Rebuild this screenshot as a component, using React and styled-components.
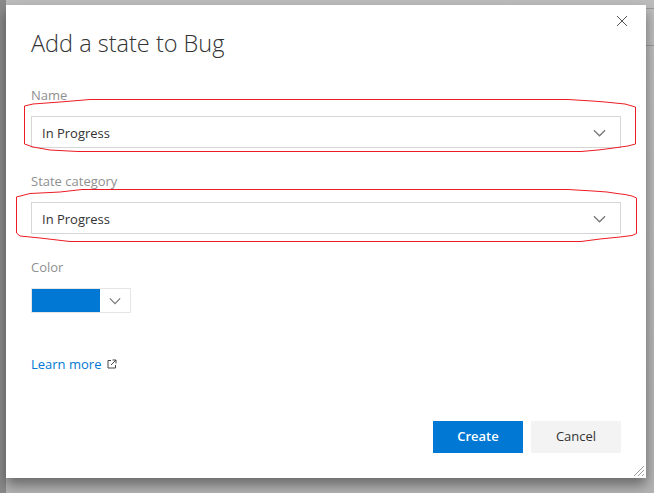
import React from 'react';
import styled, { createGlobalStyle } from 'styled-components';

const Global = createGlobalStyle`
  html, body { margin: 0; padding: 0; }
  body { font-family: "Open Sans", "Noto Sans", sans-serif; overflow: hidden; }
`;

const Backdrop = styled.div`
  position: relative;
  box-sizing: border-box;
  width: 654px;
  height: 493px;
  padding: 5px 8px 15px 6px;
  background:
    linear-gradient(#9a9a9a, #9a9a9a) right 0 top 8px / 8px 1px no-repeat,
    linear-gradient(#9a9a9a, #9a9a9a) right 0 top 45px / 8px 1px no-repeat,
    linear-gradient(#8a8a8a, #8a8a8a) left 0 top 0 / 6px 100% no-repeat,
    linear-gradient(to bottom, #bdbdbd 0, #b4b4b4 400px, #b4b4b4 100%);
`;

const Dialog = styled.div`
  position: relative;
  box-sizing: border-box;
  width: 640px;
  height: 473px;
  padding: 18px 25px 25px;
  display: flex;
  flex-direction: column;
  background: #fff;
  box-shadow: 0 7px 12px rgba(0, 0, 0, 0.42);
`;

const CloseButton = styled.button`
  position: absolute;
  top: 9px;
  right: 17px;
  width: 14px;
  height: 14px;
  padding: 0;
  border: 0;
  background: none;
  display: flex;
`;

const Title = styled.h2`
  margin: 0 0 23px;
  font-size: 23.5px;
  line-height: 40px;
  font-weight: 300;
  color: #333;
`;

const Field = styled.div`
  display: flex;
  flex-direction: column;
  margin-bottom: 24px;
`;

const Label = styled.label`
  font-size: 13px;
  line-height: 18px;
  margin-bottom: 12px;
  color: #8f8f8f;
`;

const SelectBox = styled.div`
  box-sizing: border-box;
  height: 32px;
  padding: 1px 14px 0 10px;
  display: flex;
  align-items: center;
  justify-content: space-between;
  border: 1px solid #d6d6d6;
  font-size: 13px;
  color: #333;
`;

const ColorPicker = styled.div`
  box-sizing: border-box;
  width: 100px;
  height: 25px;
  display: flex;
  border: 1px solid #e6e6e6;
`;

const Swatch = styled.div`
  width: 68px;
  background: ${props => props.color};
`;

const ColorArrow = styled.div`
  flex: 1;
  display: flex;
  align-items: center;
  justify-content: center;
`;

const LearnMore = styled.a`
  margin-top: 18px;
  display: flex;
  align-items: center;
  gap: 6px;
  font-size: 13px;
  line-height: 18px;
  color: #0078d4;
`;

const Footer = styled.div`
  margin-top: auto;
  display: flex;
  justify-content: flex-end;
  gap: 8px;
`;

const Button = styled.button`
  width: 90px;
  height: 32px;
  padding: 0 0 2px;
  border: 0;
  font-family: inherit;
  font-size: 13px;
  font-weight: ${props => (props.primary ? 600 : 400)};
  color: ${props => (props.primary ? '#fff' : '#333')};
  background: ${props => (props.primary ? '#0078d4' : '#f3f3f3')};
`;

const Grip = styled.svg`
  position: absolute;
  right: 2px;
  bottom: 2px;
`;

const Annotations = styled.svg`
  position: absolute;
  left: 0;
  top: 0;
  pointer-events: none;
`;

const Chevron = ({ width = 13, color = '#777' }) => (
  <svg width={width} height="8" viewBox="0 0 14 8" fill="none">
    <path d="M1 1l6 6 6-6" stroke={color} strokeWidth="1.4" />
  </svg>
);

export default function App() {
  return (
    <>
      <Global />
      <Backdrop>
        <Dialog>
          <CloseButton aria-label="Close">
            <svg width="14" height="14" viewBox="0 0 14 14" fill="none">
              <path d="M2 2l10 10M12 2L2 12" stroke="#555" strokeWidth="1" />
            </svg>
          </CloseButton>
          <Title>Add a state to Bug</Title>
          <Field>
            <Label>Name</Label>
            <SelectBox>
              In Progress
              <Chevron />
            </SelectBox>
          </Field>
          <Field>
            <Label>State category</Label>
            <SelectBox>
              In Progress
              <Chevron />
            </SelectBox>
          </Field>
          <Field>
            <Label>Color</Label>
            <ColorPicker>
              <Swatch color="#0078d4" />
              <ColorArrow>
                <Chevron width={12} />
              </ColorArrow>
            </ColorPicker>
          </Field>
          <LearnMore>
            Learn more
            <svg width="10" height="10" viewBox="0 0 10 10" fill="none">
              <path d="M4 1.500H1v7.500h7.500V6" stroke="#444" strokeWidth="1" />
              <path d="M4 6l5-5M5.500 1H9v3.500" stroke="#444" strokeWidth="1" />
            </svg>
          </LearnMore>
          <Footer>
            <Button primary>Create</Button>
            <Button>Cancel</Button>
          </Footer>
          <Grip width="10" height="10" viewBox="0 0 10 10" fill="none">
            <path d="M0 10L10 0M4 10l6-6M8 10l2-2" stroke="#888" strokeWidth="0.8" />
          </Grip>
        </Dialog>
        <Annotations width="654" height="493" viewBox="0 0 654 493" fill="none">
          <path
            d="M24.500 106 L33 104 L60 102 L90 99.500 L568 99.500 L592 101 L605 102 L625 104 L635.500 107 L635.500 144 L628 146 L610 148.500 L598 150 L581 151.500 L78 151.500 L50 150 L33 147 L24.500 144 Z"
            stroke="#ed1c24"
            strokeWidth="1"
          />
          <path
            d="M16.500 197 L30 193.500 L60 192 L82 189.500 L568 189.500 L593 191 L607 192 L617 193.500 L625 194.500 L632 196 L636.500 198 L636.500 233.500 L632 235.500 L620 237 L610 238 L600 239 L581 241.500 L70 241.500 L40 238 L20 236 L16.500 233 Z"
            stroke="#ed1c24"
            strokeWidth="1"
          />
        </Annotations>
      </Backdrop>
    </>
  );
}
